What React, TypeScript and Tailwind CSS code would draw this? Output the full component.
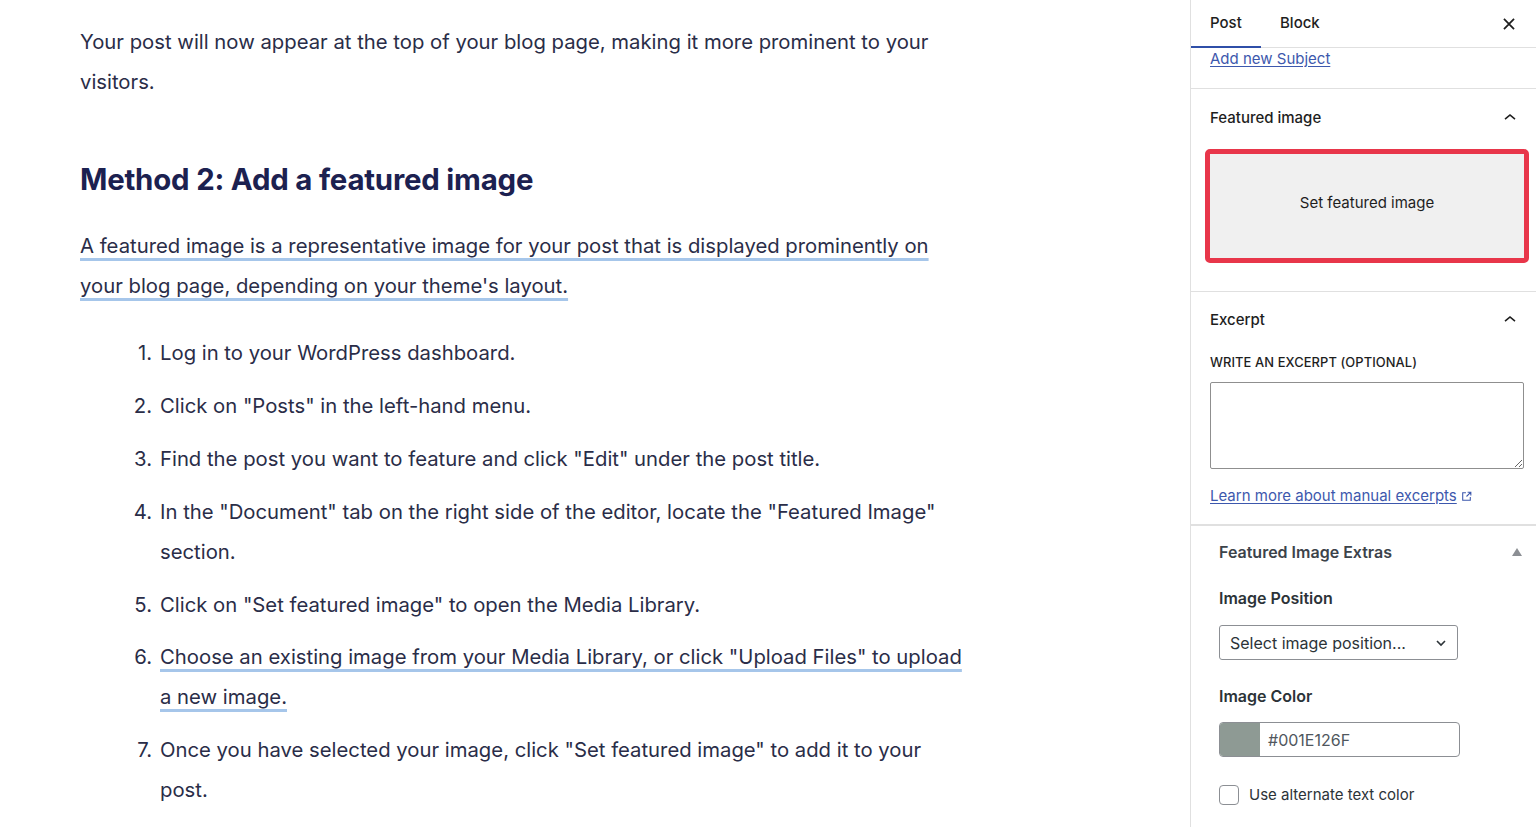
import React from "react";

const ul = "underline decoration-[#a6c6ea] decoration-[3px] underline-offset-[5px]";

function Chevron({ up }: { up?: boolean }) {
  return (
    <svg width="24" height="24" viewBox="0 0 24 24" className="text-[#1e1e1e]">
      <path
        d={up ? "M6.5 12.6 12 8l5.5 4.6-1 1.2L12 10.1l-4.5 3.7z" : "M17.5 11.4 12 16l-5.5-4.6 1-1.2L12 13.9l4.5-3.7z"}
        fill="currentColor"
      />
    </svg>
  );
}

export default function App() {
  const items: { n: number; text: string; u?: boolean }[] = [
    { n: 1, text: "Log in to your WordPress dashboard." },
    { n: 2, text: 'Click on "Posts" in the left-hand menu.' },
    { n: 3, text: 'Find the post you want to feature and click "Edit" under the post title.' },
    { n: 4, text: 'In the "Document" tab on the right side of the editor, locate the "Featured Image" section.' },
    { n: 5, text: 'Click on "Set featured image" to open the Media Library.' },
    { n: 6, text: 'Choose an existing image from your Media Library, or click "Upload Files" to upload a new image.', u: true },
    { n: 7, text: 'Once you have selected your image, click "Set featured image" to add it to your post.' },
  ];
  return (
    <div className="w-[1536px] h-[827px] overflow-hidden bg-white flex" style={{ fontFamily: "Inter, 'Noto Sans', sans-serif" }}>
      {/* main content */}
      <div className="flex-1 min-w-0 overflow-hidden">
        <div className="ml-[80px] w-[884px] pt-[22px] text-[20.3px] leading-[40px] text-[#2a2d48]">
          <p>Your post will now appear at the top of your blog page, making it more prominent to your visitors.</p>
          <h2 className="mt-[58px] text-[29.4px] leading-[40px] font-bold text-[#1c2150] tracking-[-0.2px]">Method 2: Add a featured image</h2>
          <p className="mt-[26px]">
            <span className={ul}>A featured image is a representative image for your post that is displayed prominently on your blog page, depending on your theme's layout.</span>
          </p>
          <ol className="mt-[27px] flex flex-col gap-[12.9px]">
            {items.map((it) => (
              <li key={it.n} className="flex">
                <span className="w-[80px] shrink-0 text-right pr-[8px]">{it.n}.</span>
                <span className="flex-1 min-w-0">
                  {it.u ? <span className={ul}>{it.text}</span> : it.text}
                </span>
              </li>
            ))}
          </ol>
        </div>
      </div>

      {/* sidebar */}
      <div className="w-[346px] shrink-0 border-l border-[#e0e0e0] text-[#1e1e1e] flex flex-col">
        <div className="h-[48px] border-b border-[#e0e0e0] flex items-stretch relative">
          <div className="w-[70px] flex items-center pl-[19px] text-[15px] font-medium relative">
            Post
            <span className="absolute left-0 right-0 bottom-[-1px] h-[2px] bg-[#2f4fa8]"></span>
          </div>
          <div className="flex items-center pl-[19px] text-[15px] font-medium">Block</div>
          <div className="ml-auto flex items-center pr-[16px]">
            <svg width="22" height="22" viewBox="0 0 24 24"><path d="M6.5 6.5l11 11M17.5 6.5l-11 11" stroke="#1e1e1e" strokeWidth="1.9" /></svg>
          </div>
        </div>
        <div className="h-[43px] border-b border-[#e0e0e0] pl-[19px] pt-0 mt-[-2px]">
          <a className="text-[15px] leading-[18px] text-[#3d58ad] underline underline-offset-[2px]">Add new Subject</a>
        </div>

        <div className="border-b border-[#e0e0e0] pb-[28px] mt-[1px]">
          <div className="h-[56px] flex items-center justify-between pl-[19px] pr-[14px]">
            <span className="text-[15px] font-medium">Featured image</span>
            <Chevron up />
          </div>
          <div className="ml-[14px] mr-[7px] mt-[3px] h-[114px] rounded-[5px] border-[5px] border-[#e8364a] bg-[#f0f0f0] flex items-center justify-center">
            <span className="text-[15px] text-[#1e1e1e] mt-[-5px]">Set featured image</span>
          </div>
        </div>

        <div className="border-b-2 border-[#e0e0e0] pb-[18px]">
          <div className="h-[56px] flex items-center justify-between pl-[19px] pr-[14px]">
            <span className="text-[15px] font-medium">Excerpt</span>
            <Chevron up />
          </div>
          <div className="pl-[19px] mt-[7px] text-[12.9px] font-medium uppercase tracking-[0.1px] leading-[16px]">Write an excerpt (optional)</div>
          <textarea className="block ml-[19px] mt-[11px] w-[314px] h-[87px] border border-[#8f8f8f] rounded-[2px] resize-y"></textarea>
          <div className="pl-[19px] mt-[17px] flex items-center gap-[3px]">
            <a className="text-[15px] leading-[20px] text-[#3d58ad] underline underline-offset-[2px]">Learn more about manual excerpts</a>
            <svg width="13" height="13" viewBox="0 0 24 24" fill="none" stroke="#3d58ad" strokeWidth="2">
              <path d="M19 13v6H5V5h6" />
              <path d="M14 4h6v6M20 4l-8 8" />
            </svg>
          </div>
        </div>

        <div className="pl-[28px] pr-[14px]">
          <div className="h-[52px] flex items-center justify-between">
            <span className="text-[16px] font-semibold text-[#3c434a]">Featured Image Extras</span>
            <svg width="10" height="8" viewBox="0 0 10 8"><path d="M5 0 10 8H0z" fill="#8c8f94" /></svg>
          </div>
          <div className="mt-[9px] text-[16px] font-semibold leading-[22px] text-[#2c3338]">Image Position</div>
          <div className="mt-[16px] w-[239px] h-[35px] border border-[#8c8f94] rounded-[3px] flex items-center justify-between pl-[10px] pr-[8px]">
            <span className="text-[16px] text-[#2c3338]">Select image position...</span>
            <svg width="16" height="16" viewBox="0 0 24 24" fill="none" stroke="#2c3338" strokeWidth="2.4"><path d="M6 9l6 6 6-6" /></svg>
          </div>
          <div className="mt-[25px] text-[16px] font-semibold leading-[22px] text-[#2c3338]">Image Color</div>
          <div className="mt-[15px] w-[241px] h-[35px] border border-[#8c8f94] rounded-[4px] flex overflow-hidden">
            <div className="w-[40px] bg-[#8e9a94]"></div>
            <span className="pl-[8px] flex items-center text-[16px] text-[#50575e]">#001E126F</span>
          </div>
          <div className="mt-[27px] flex items-center gap-[10px]">
            <div className="w-[20px] h-[20px] border border-[#8c8f94] rounded-[4px]"></div>
            <span className="text-[15px] text-[#2c3338]">Use alternate text color</span>
          </div>
        </div>
      </div>
    </div>
  );
}
